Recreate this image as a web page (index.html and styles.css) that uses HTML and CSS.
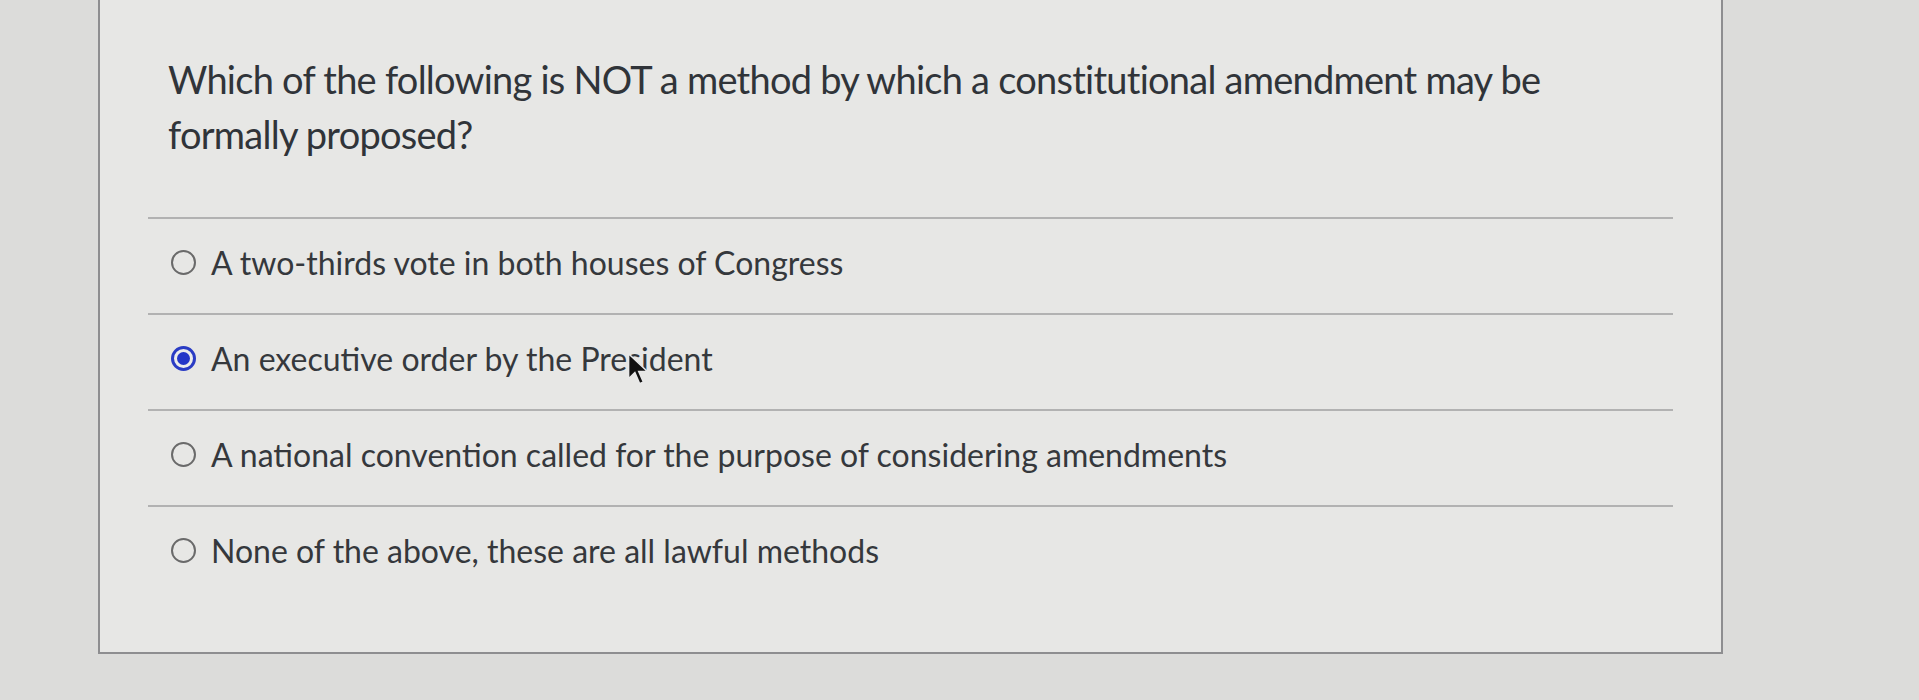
FILE: index.html
```html
<!DOCTYPE html>
<html lang="en">
<head>
<meta charset="utf-8">
<title>Quiz question</title>
<link rel="stylesheet" href="styles.css">
</head>
<body>
<div class="page">
  <div class="card">
    <div class="question">Which of the following is NOT a method by which a constitutional amendment may be<br>formally proposed?</div>
    <div class="answers">
      <label class="answer">
        <span class="radio"></span>
        <span class="answer-text">A two-thirds vote in both houses of Congress</span>
      </label>
      <label class="answer">
        <span class="radio radio-checked"></span>
        <span class="answer-text">An executive order by the Pre<span class="anchor">s<svg class="cursor" viewBox="0 0 14 22" width="22" height="35"><path d="M1 1 L1 17 L5 13 L8 20 L10.5 19 L7.5 12.3 L13 12.3 Z" fill="#111" stroke="#e8e8e8" stroke-width="1"/></svg></span>ident</span>
      </label>
      <label class="answer">
        <span class="radio"></span>
        <span class="answer-text">A national convention called for the purpose of considering amendments</span>
      </label>
      <label class="answer">
        <span class="radio"></span>
        <span class="answer-text">None of the above, these are all lawful methods</span>
      </label>
    </div>
  </div>
</div>
</body>
</html>
```

FILE: styles.css
```css
html, body {
  margin: 0;
  padding: 0;
}
body {
  background: #dcdcda;
  font-family: Lato, "Open Sans", "Liberation Sans", sans-serif;
  color: #303439;
  width: 1919px;
  height: 700px;
  overflow: hidden;
}
.page {
  padding-left: 98px;
}
.card {
  width: 1625px;
  height: 654px;
  box-sizing: border-box;
  background: #e7e7e5;
  border: 2px solid #8e8e90;
  border-top: none;
  padding: 52px 48px 0 48px;
}
.question {
  font-size: 38px;
  line-height: 55px;
  padding: 0 20px;
  letter-spacing: -0.75px;
}
.answers {
  margin-top: 55px;
}
.answer {
  display: flex;
  align-items: center;
  height: 96px;
  padding-bottom: 8px;
  box-sizing: border-box;
  border-top: 2px solid #b2b2b2;
  padding-left: 23px;
  gap: 15px;
}
.radio {
  width: 25px;
  height: 25px;
  border-radius: 50%;
  border: 2px solid #6a6a6a;
  box-sizing: border-box;
  flex: none;
  position: relative;
}
.radio-checked {
  border: 3px solid #2a3cc4;
  background: #ececec;
}
.radio-checked::after {
  content: "";
  position: absolute;
  left: 3px;
  top: 3px;
  width: 13px;
  height: 13px;
  border-radius: 50%;
  background: #2436c8;
}
.answer-text {
  font-size: 32px;
  color: #35383c;
}
.anchor {
  position: relative;
}
.cursor {
  position: absolute;
  left: 0;
  top: 13px;
}
```
